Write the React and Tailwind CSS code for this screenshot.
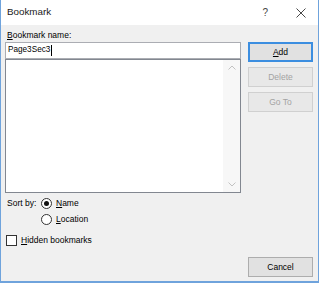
import React from "react";

const font = { fontFamily: '"Liberation Sans", Arial, sans-serif' };

function Btn({ children, primary, disabled, className = "" }) {
  let cls = "w-[65px] h-[20px] flex items-center justify-center text-[8.5px] ";
  if (primary) cls += "bg-[#e1e1e1] border-2 border-[#3c8ee0] text-black";
  else if (disabled) cls += "bg-[#e8e8e8] border border-[#d0d0d0] text-[#a3a3a3]";
  else cls += "bg-[#e1e1e1] border border-[#adadad] text-black";
  return <div className={cls + " " + className}>{children}</div>;
}

export default function App() {
  return (
    <div style={font} className="w-[319px] h-[283px] flex flex-col bg-[#f0f0f0] border-x border-b-2 border-[#6fa3dc] text-black overflow-hidden">
      <div className="h-[25px] bg-white flex items-center shrink-0">
        <span className="ml-[6px] text-[9.8px] text-[#1a1a1a]">Bookmark</span>
        <span className="ml-auto mr-[28px] text-[10px] text-[#444]">?</span>
        <svg width="10" height="10" viewBox="0 0 10 10" className="mr-[12px]">
          <path d="M0.5 0.5 L9.5 9.5 M9.5 0.5 L0.5 9.5" stroke="#333" strokeWidth="0.9" />
        </svg>
      </div>
      <div className="flex flex-1 pl-[4px] pr-[5px]">
        <div className="w-[236px] flex flex-col">
          <div className="mt-[3px] h-[14px] leading-[14px] text-[8.5px] pl-[2px]">
            <span className="underline">B</span>ookmark name:
          </div>
          <div className="h-[17px] bg-white border border-[#abadb3] flex items-center pl-[2px] text-[8.2px]">
            Page3Sec3<span className="inline-block w-px h-[11px] bg-black ml-px" />
          </div>
          <div className="h-[134px] bg-white border border-[#828790] flex">
            <div className="flex-1" />
            <div className="w-[17px] bg-[#f7f7f7] flex flex-col items-center justify-between py-[5px]">
              <svg width="8" height="5" viewBox="0 0 8 5">
                <path d="M0.5 4.5 L4 1 L7.5 4.5" stroke="#c2c2c2" strokeWidth="1" fill="none" />
              </svg>
              <svg width="8" height="5" viewBox="0 0 8 5">
                <path d="M0.5 0.5 L4 4 L7.5 0.5" stroke="#c2c2c2" strokeWidth="1" fill="none" />
              </svg>
            </div>
          </div>
          <div className="flex mt-[3px] text-[8.5px]">
            <div className="pl-[2px] w-[36px] h-[15px] leading-[15px]">Sort by:</div>
            <div className="flex flex-col">
              <div className="flex items-center h-[15px]">
                <span className="w-[11px] h-[11px] rounded-full border border-[#333] bg-white flex items-center justify-center">
                  <span className="w-[5px] h-[5px] rounded-full bg-[#111]" />
                </span>
                <span className="ml-[4px]"><span className="underline">N</span>ame</span>
              </div>
              <div className="flex items-center h-[15px] mt-[1px]">
                <span className="w-[11px] h-[11px] rounded-full border border-[#333] bg-white" />
                <span className="ml-[4px]"><span className="underline">L</span>ocation</span>
              </div>
            </div>
          </div>
          <div className="flex items-center mt-[7px] text-[8.5px] pl-[1px]">
            <span className="w-[11px] h-[11px] border border-[#333] bg-white" />
            <span className="ml-[4px]"><span className="underline">H</span>idden bookmarks</span>
          </div>
        </div>
        <div className="ml-[7px] flex flex-col pt-[17px] pb-[4px]">
          <Btn primary><span><span className="underline">A</span>dd</span></Btn>
          <Btn disabled className="mt-[5px]">Delete</Btn>
          <Btn disabled className="mt-[5px]">Go To</Btn>
          <div className="flex-1" />
          <Btn>Cancel</Btn>
        </div>
      </div>
    </div>
  );
}
